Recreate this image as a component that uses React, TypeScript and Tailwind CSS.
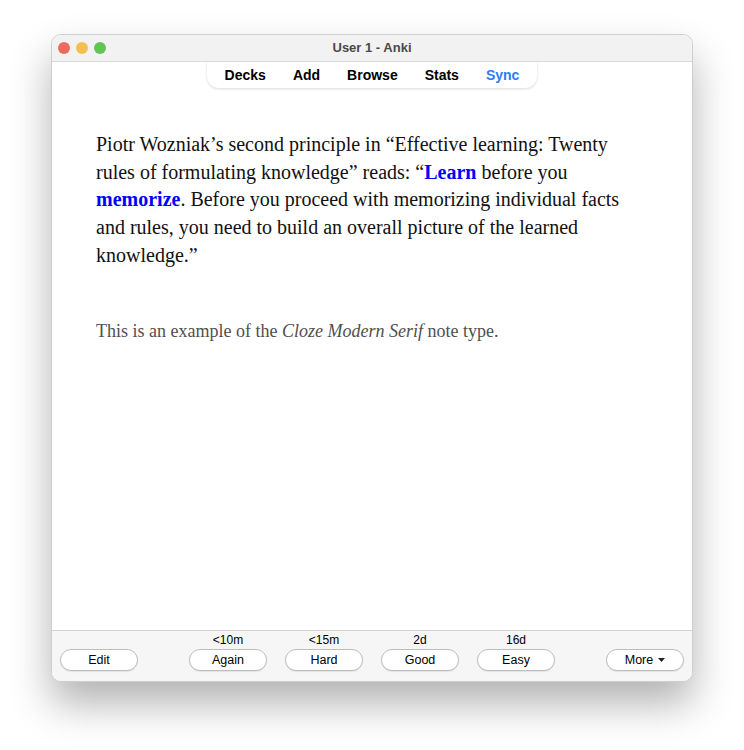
import React from 'react';

const sans = { fontFamily: '"Liberation Sans", Arial, sans-serif' };
const serif = { fontFamily: '"Liberation Serif", "Times New Roman", serif' };

function Btn({ label, caret }: { label: string; caret?: boolean }) {
  return (
    <button className="flex h-[22px] w-[78px] items-center justify-center gap-[5px] rounded-full border border-[#bdbdbd] bg-white text-[12.5px] text-black shadow-[0_1px_1px_rgba(0,0,0,0.08)]">
      {label}
      {caret && (
        <svg width="7" height="4" viewBox="0 0 7 4">
          <path d="M0 0h7L3.5 4z" fill="#222" />
        </svg>
      )}
    </button>
  );
}

function Answer({ time, label }: { time: string; label: string }) {
  return (
    <div className="flex flex-col items-center gap-[1px]">
      <span className="text-[12px] leading-[15px] text-black">{time}</span>
      <Btn label={label} />
    </div>
  );
}

export default function App() {
  return (
    <div className="h-[750px] w-[744px] bg-white pt-[34px] pl-[51px]" style={sans}>
      <div className="flex h-[648px] w-[642px] flex-col overflow-hidden rounded-[10px] border border-[#cfcfcf] bg-white shadow-[0_22px_40px_rgba(0,0,0,0.3)]">
        {/* title bar */}
        <div className="relative flex h-[27px] shrink-0 items-center justify-center border-b border-[#dadada] bg-[#f2f2f2]">
          <div className="absolute left-[6px] top-[7px] flex gap-[6px]">
            <span className="h-[12px] w-[12px] rounded-full bg-[#ed6a5e]" />
            <span className="h-[12px] w-[12px] rounded-full bg-[#f5bf4f]" />
            <span className="h-[12px] w-[12px] rounded-full bg-[#61c554]" />
          </div>
          <span className="text-[13px] font-bold text-[#4a4a4a]">User 1 - Anki</span>
        </div>

        {/* toolbar */}
        <div className="flex justify-center">
          <div className="flex h-[26px] w-[330px] items-center justify-center gap-[27px] rounded-b-[12px] bg-white text-[14px] font-bold shadow-[0_1px_3px_rgba(0,0,0,0.15)]">
            <span className="text-black">Decks</span>
            <span className="text-black">Add</span>
            <span className="text-black">Browse</span>
            <span className="text-black">Stats</span>
            <span className="text-[#2c7cf6]">Sync</span>
          </div>
        </div>

        {/* card */}
        <div className="flex-1 px-[44px] pt-[43px]" style={serif}>
          <p className="text-[20px] leading-[27.7px] text-[#111]">
            Piotr Wozniak’s second principle in “Effective learning: Twenty rules of formulating knowledge” reads:{' '}
            <span>
              “<b className="text-[#0000ff]">Learn</b>
            </span>{' '}
            before you <b className="text-[#0000ff]">memorize</b>. Before you proceed with memorizing individual facts
            and rules, you need to build an overall picture of the learned knowledge.”
          </p>
          <p className="mt-[47px] text-[18px] leading-[28px] text-[#4f4f4f]">
            This is an example of the <i>Cloze Modern Serif</i> note type.
          </p>
        </div>

        {/* bottom bar */}
        <div className="flex h-[51px] shrink-0 items-end border-t border-[#d4d4d4] bg-[#f6f6f6] px-[8px] pb-[10px]">
          <Btn label="Edit" />
          <div className="ml-[51px] flex gap-[18px]">
            <Answer time="<10m" label="Again" />
            <Answer time="<15m" label="Hard" />
            <Answer time="2d" label="Good" />
            <Answer time="16d" label="Easy" />
          </div>
          <div className="ml-auto">
            <Btn label="More" caret />
          </div>
        </div>
      </div>
    </div>
  );
}
